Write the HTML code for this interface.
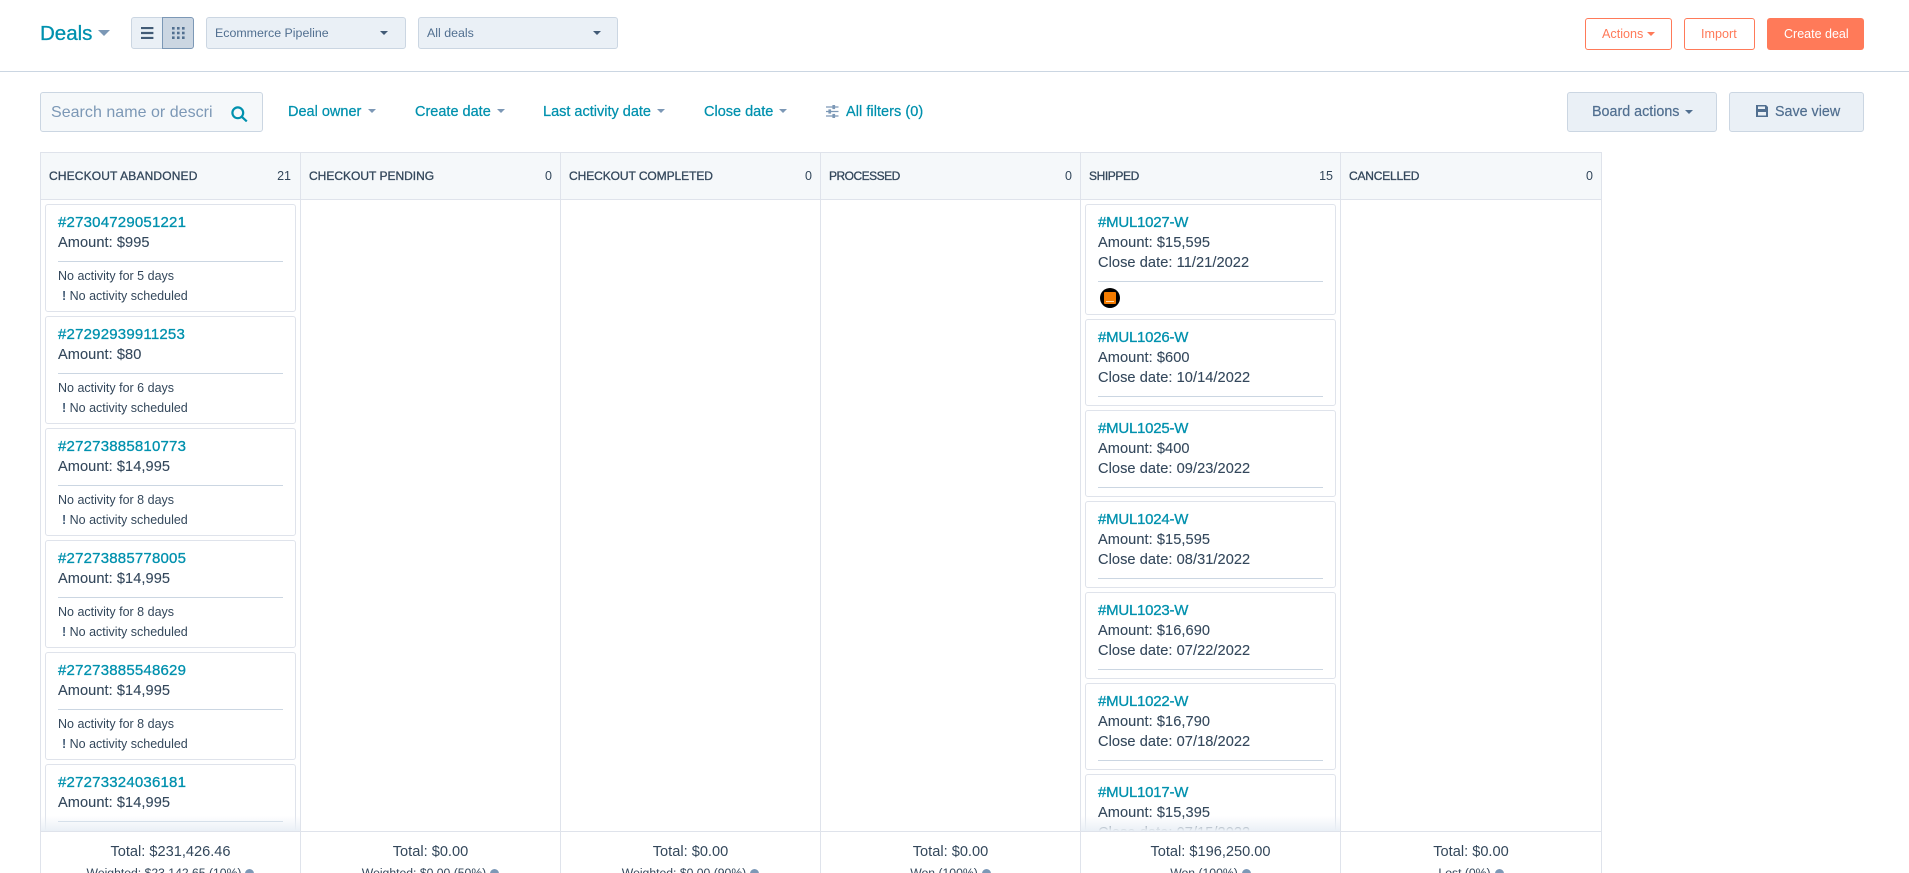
<!DOCTYPE html>
<html><head><meta charset="utf-8"><title>Deals</title>
<style>
html,body{margin:0;padding:0;background:#fff}
#p{position:relative;width:1909px;height:873px;overflow:hidden;background:#fff;font-family:"Liberation Sans",sans-serif;color:#33475b}
#p div{position:absolute;white-space:nowrap;box-sizing:border-box}
.c{width:0;height:0;border-left:4px solid transparent;border-right:4px solid transparent;border-top:4px solid #7c98b6}
.dd{top:17px;height:32px;background:#eaf0f6;border:1px solid #cbd6e2;border-radius:3px}
.ddt{top:24px;line-height:18px;font-size:12.4px;color:#516f90}
.f{top:102px;line-height:20px;font-size:14.5px;color:#0091ae;-webkit-text-stroke:.25px #0091ae}
.btn{border-radius:3px}
.col{top:152px;height:721px;width:261px;border:1px solid #dfe3eb}
.hd{top:152px;height:48px;background:#f5f8fa;border:1px solid #dfe3eb}
.ht{top:167px;line-height:18px;font-size:12px;color:#33475b;-webkit-text-stroke:.3px #33475b}
.cn{top:167px;line-height:18px;font-size:12.5px;color:#33475b;text-align:right;width:30px}
.clip{left:0;top:200px;width:1909px;height:631px;overflow:hidden}
.card{width:251px;background:#fff;border:1px solid #dfe3eb;border-radius:3px}
.id{line-height:20px;font-size:15px;letter-spacing:.2px;color:#0091ae;-webkit-text-stroke:.3px #0091ae}
.m{letter-spacing:-.24px}
.a{line-height:20px;font-size:14.6px;letter-spacing:.06px;color:#33475b;-webkit-text-stroke:.1px #33475b}
.s{line-height:18px;font-size:12.5px;color:#33475b}
.ln{height:1px;background:#cbd6e2;width:225px}
.fade{top:816px;height:15px;background:linear-gradient(rgba(234,240,246,0),rgba(234,240,246,1))}
.ft{top:831px;height:42px;width:261px;border:1px solid #dfe3eb;border-bottom:0;background:#fff;text-align:center}
.tot{left:0;width:100%;top:10px;line-height:20px;font-size:14.6px;color:#33475b;text-align:center}
.w{left:0;width:100%;top:33px;line-height:16px;font-size:12.2px;color:#33475b;text-align:center}
.i{display:inline-block;width:9px;height:9px;border-radius:50%;background:#7c98b6;margin-left:4px;vertical-align:-1px}
</style></head><body><div id="p">

<div style="left:40px;top:21px;line-height:26px;font-size:20.5px;color:#0091ae;-webkit-text-stroke:.3px #0091ae">Deals</div>
<div class="c" style="left:98px;top:30px;border-left-width:6.5px;border-right-width:6.5px;border-top-width:6px"></div>

<div style="left:131px;top:17px;width:32px;height:32px;background:#eaf0f6;border:1px solid #cbd6e2;border-radius:3px 0 0 3px"></div>
<div style="left:162px;top:17px;width:32px;height:32px;background:#cbd6e2;border:1px solid #7c98b6;border-radius:0 3px 3px 0"></div>
<svg style="position:absolute;left:141px;top:27px" width="13" height="12"><path d="M0 1h12.4M0 6h12.4M0 11h12.4" stroke="#425b76" stroke-width="2.2"/></svg>
<svg style="position:absolute;left:172px;top:27px" width="13" height="12" fill="#516f90"><rect x="0" y="0" width="2.6" height="2.6"/><rect x="5" y="0" width="2.6" height="2.6"/><rect x="10" y="0" width="2.6" height="2.6"/><rect x="0" y="4.7" width="2.6" height="2.6"/><rect x="5" y="4.7" width="2.6" height="2.6"/><rect x="10" y="4.7" width="2.6" height="2.6"/><rect x="0" y="9.4" width="2.6" height="2.6"/><rect x="5" y="9.4" width="2.6" height="2.6"/><rect x="10" y="9.4" width="2.6" height="2.6"/></svg>

<div class="dd" style="left:206px;width:200px"></div>
<div class="ddt" style="left:215px">Ecommerce Pipeline</div>
<div class="c" style="left:380px;top:31px;border-top-color:#425b76"></div>
<div class="dd" style="left:418px;width:200px"></div>
<div class="ddt" style="left:427px">All deals</div>
<div class="c" style="left:593px;top:31px;border-top-color:#425b76"></div>

<div class="btn" style="left:1585px;top:18px;width:87px;height:32px;border:1px solid #ff7a59"></div>
<div style="left:1602px;top:25px;line-height:18px;font-size:12.6px;color:#ff7a59">Actions</div>
<div class="c" style="left:1647px;top:32px;border-top-color:#ff7a59"></div>
<div class="btn" style="left:1684px;top:18px;width:71px;height:32px;border:1px solid #ff7a59"></div>
<div style="left:1701px;top:25px;line-height:18px;font-size:12.6px;color:#ff7a59">Import</div>
<div class="btn" style="left:1767px;top:18px;width:97px;height:32px;background:#ff7a59"></div>
<div style="left:1784px;top:25px;line-height:18px;font-size:12.5px;color:#fff">Create deal</div>

<div style="left:0;top:71px;width:1909px;height:1px;background:#cbd6e2"></div>

<div style="left:40px;top:92px;width:223px;height:40px;background:#f5f8fa;border:1px solid #cbd6e2;border-radius:3px"></div>
<div style="left:51px;top:103px;line-height:20px;font-size:16px;letter-spacing:.03px;color:#7c98b6">Search name or descri</div>
<svg style="position:absolute;left:231px;top:106px" width="17" height="16" fill="none" stroke="#0091ae" stroke-width="2.2"><circle cx="6.8" cy="6.8" r="5.4"/><path d="M10.8 10.8l5 4.6"/></svg>

<div class="f" style="left:288px">Deal owner</div><div class="c" style="left:368px;top:109px"></div>
<div class="f" style="left:415px">Create date</div><div class="c" style="left:497px;top:109px"></div>
<div class="f" style="left:543px">Last activity date</div><div class="c" style="left:657px;top:109px"></div>
<div class="f" style="left:704px">Close date</div><div class="c" style="left:779px;top:109px"></div>
<svg style="position:absolute;left:826px;top:105px" width="13" height="13" stroke="#7c98b6" stroke-width="1.2" fill="#7c98b6"><path d="M0 2h12.5M0 6.5h12.5M0 11h12.5"/><rect x="7" y=".5" width="1.5" height="3"/><rect x="3" y="5" width="1.5" height="3"/><rect x="7" y="9.5" width="1.5" height="3"/></svg>
<div class="f" style="left:846px;letter-spacing:.05px">All filters (0)</div>

<div class="btn" style="left:1567px;top:92px;width:150px;height:40px;background:#eaf0f6;border:1px solid #cbd6e2"></div>
<div style="left:1592px;top:102px;line-height:20px;font-size:14.3px;color:#516f90;-webkit-text-stroke:.2px #516f90">Board actions</div>
<div class="c" style="left:1685px;top:110px;border-top-color:#516f90"></div>
<div class="btn" style="left:1729px;top:92px;width:135px;height:40px;background:#eaf0f6;border:1px solid #cbd6e2"></div>
<svg style="position:absolute;left:1756px;top:105px" width="12" height="12"><path d="M0 0h10l2 2v10H0z" fill="#516f90"/><rect x="2" y="1.5" width="7" height="2.5" fill="#eaf0f6"/><rect x="2" y="7" width="8" height="3.5" fill="#eaf0f6"/></svg>
<div style="left:1775px;top:102px;line-height:20px;font-size:14.3px;color:#516f90;-webkit-text-stroke:.2px #516f90">Save view</div>

<div class="col" style="left:40px"></div><div class="col" style="left:300px"></div><div class="col" style="left:560px"></div><div class="col" style="left:820px"></div><div class="col" style="left:1080px"></div><div class="col" style="left:1340px;width:262px"></div>

<div class="hd" style="left:40px;width:261px"></div><div class="hd" style="left:300px;width:261px"></div><div class="hd" style="left:560px;width:261px"></div><div class="hd" style="left:820px;width:261px"></div><div class="hd" style="left:1080px;width:261px"></div><div class="hd" style="left:1340px;width:262px"></div>

<div class="ht" style="left:49px;letter-spacing:.15px">CHECKOUT ABANDONED</div><div class="cn" style="left:261px">21</div>
<div class="ht" style="left:309px">CHECKOUT PENDING</div><div class="cn" style="left:522px">0</div>
<div class="ht" style="left:569px;letter-spacing:-.07px">CHECKOUT COMPLETED</div><div class="cn" style="left:782px">0</div>
<div class="ht" style="left:829px;letter-spacing:-.5px">PROCESSED</div><div class="cn" style="left:1042px">0</div>
<div class="ht" style="left:1089px;letter-spacing:-.4px">SHIPPED</div><div class="cn" style="left:1303px">15</div>
<div class="ht" style="left:1349px;letter-spacing:-.2px">CANCELLED</div><div class="cn" style="left:1563px">0</div>

<div class="clip">
<div class="card" style="left:45px;top:4px;height:108px"></div><div class="id" style="left:58px;top:13px">#27304729051221</div><div class="a" style="left:58px;top:33px">Amount: $995</div><div class="ln" style="left:58px;top:61px"></div><div class="s" style="left:58px;top:67px">No activity for 5 days</div><div class="s" style="left:62px;top:87px"><b style="color:#425b76">!</b>&nbsp;No activity scheduled</div>
<div class="card" style="left:45px;top:116px;height:108px"></div><div class="id" style="left:58px;top:125px">#27292939911253</div><div class="a" style="left:58px;top:145px">Amount: $80</div><div class="ln" style="left:58px;top:173px"></div><div class="s" style="left:58px;top:179px">No activity for 6 days</div><div class="s" style="left:62px;top:199px"><b style="color:#425b76">!</b>&nbsp;No activity scheduled</div>
<div class="card" style="left:45px;top:228px;height:108px"></div><div class="id" style="left:58px;top:237px">#27273885810773</div><div class="a" style="left:58px;top:257px">Amount: $14,995</div><div class="ln" style="left:58px;top:285px"></div><div class="s" style="left:58px;top:291px">No activity for 8 days</div><div class="s" style="left:62px;top:311px"><b style="color:#425b76">!</b>&nbsp;No activity scheduled</div>
<div class="card" style="left:45px;top:340px;height:108px"></div><div class="id" style="left:58px;top:349px">#27273885778005</div><div class="a" style="left:58px;top:369px">Amount: $14,995</div><div class="ln" style="left:58px;top:397px"></div><div class="s" style="left:58px;top:403px">No activity for 8 days</div><div class="s" style="left:62px;top:423px"><b style="color:#425b76">!</b>&nbsp;No activity scheduled</div>
<div class="card" style="left:45px;top:452px;height:108px"></div><div class="id" style="left:58px;top:461px">#27273885548629</div><div class="a" style="left:58px;top:481px">Amount: $14,995</div><div class="ln" style="left:58px;top:509px"></div><div class="s" style="left:58px;top:515px">No activity for 8 days</div><div class="s" style="left:62px;top:535px"><b style="color:#425b76">!</b>&nbsp;No activity scheduled</div>
<div class="card" style="left:45px;top:564px;height:108px"></div><div class="id" style="left:58px;top:573px">#27273324036181</div><div class="a" style="left:58px;top:593px">Amount: $14,995</div><div class="ln" style="left:58px;top:621px"></div>

<div class="card" style="left:1085px;top:4px;height:111px"></div><div class="id m" style="left:1098px;top:13px">#MUL1027-W</div><div class="a" style="left:1098px;top:33px">Amount: $15,595</div><div class="a" style="left:1098px;top:53px">Close date: 11/21/2022</div><div class="ln" style="left:1098px;top:81px"></div>
<div style="left:1100px;top:88px;width:20px;height:20px;border-radius:50%;background:#000"></div><div style="left:1104px;top:92px;width:12px;height:12px;background:#f57c00;border-radius:1px"></div><div style="left:1106px;top:101px;width:8px;height:1px;background:#ffe0b8"></div>
<div class="card" style="left:1085px;top:119px;height:87px"></div><div class="id m" style="left:1098px;top:128px">#MUL1026-W</div><div class="a" style="left:1098px;top:148px">Amount: $600</div><div class="a" style="left:1098px;top:168px">Close date: 10/14/2022</div><div class="ln" style="left:1098px;top:196px"></div>
<div class="card" style="left:1085px;top:210px;height:87px"></div><div class="id m" style="left:1098px;top:219px">#MUL1025-W</div><div class="a" style="left:1098px;top:239px">Amount: $400</div><div class="a" style="left:1098px;top:259px">Close date: 09/23/2022</div><div class="ln" style="left:1098px;top:287px"></div>
<div class="card" style="left:1085px;top:301px;height:87px"></div><div class="id m" style="left:1098px;top:310px">#MUL1024-W</div><div class="a" style="left:1098px;top:330px">Amount: $15,595</div><div class="a" style="left:1098px;top:350px">Close date: 08/31/2022</div><div class="ln" style="left:1098px;top:378px"></div>
<div class="card" style="left:1085px;top:392px;height:87px"></div><div class="id m" style="left:1098px;top:401px">#MUL1023-W</div><div class="a" style="left:1098px;top:421px">Amount: $16,690</div><div class="a" style="left:1098px;top:441px">Close date: 07/22/2022</div><div class="ln" style="left:1098px;top:469px"></div>
<div class="card" style="left:1085px;top:483px;height:87px"></div><div class="id m" style="left:1098px;top:492px">#MUL1022-W</div><div class="a" style="left:1098px;top:512px">Amount: $16,790</div><div class="a" style="left:1098px;top:532px">Close date: 07/18/2022</div><div class="ln" style="left:1098px;top:560px"></div>
<div class="card" style="left:1085px;top:574px;height:87px"></div><div class="id m" style="left:1098px;top:583px">#MUL1017-W</div><div class="a" style="left:1098px;top:603px">Amount: $15,395</div><div class="a" style="left:1098px;top:623px">Close date: 07/15/2022</div>
</div>
<div class="fade" style="left:41px;width:259px"></div>
<div class="fade" style="left:1081px;width:259px"></div>

<div class="ft" style="left:40px"><div class="tot">Total: $231,426.46</div><div class="w">Weighted: $23,142.65 (10%)<span class="i"></span></div></div>
<div class="ft" style="left:300px"><div class="tot">Total: $0.00</div><div class="w">Weighted: $0.00 (50%)<span class="i"></span></div></div>
<div class="ft" style="left:560px"><div class="tot">Total: $0.00</div><div class="w">Weighted: $0.00 (90%)<span class="i"></span></div></div>
<div class="ft" style="left:820px"><div class="tot">Total: $0.00</div><div class="w">Won (100%)<span class="i"></span></div></div>
<div class="ft" style="left:1080px"><div class="tot">Total: $196,250.00</div><div class="w">Won (100%)<span class="i"></span></div></div>
<div class="ft" style="left:1340px;width:262px"><div class="tot">Total: $0.00</div><div class="w">Lost (0%)<span class="i"></span></div></div>

</div></body></html>
